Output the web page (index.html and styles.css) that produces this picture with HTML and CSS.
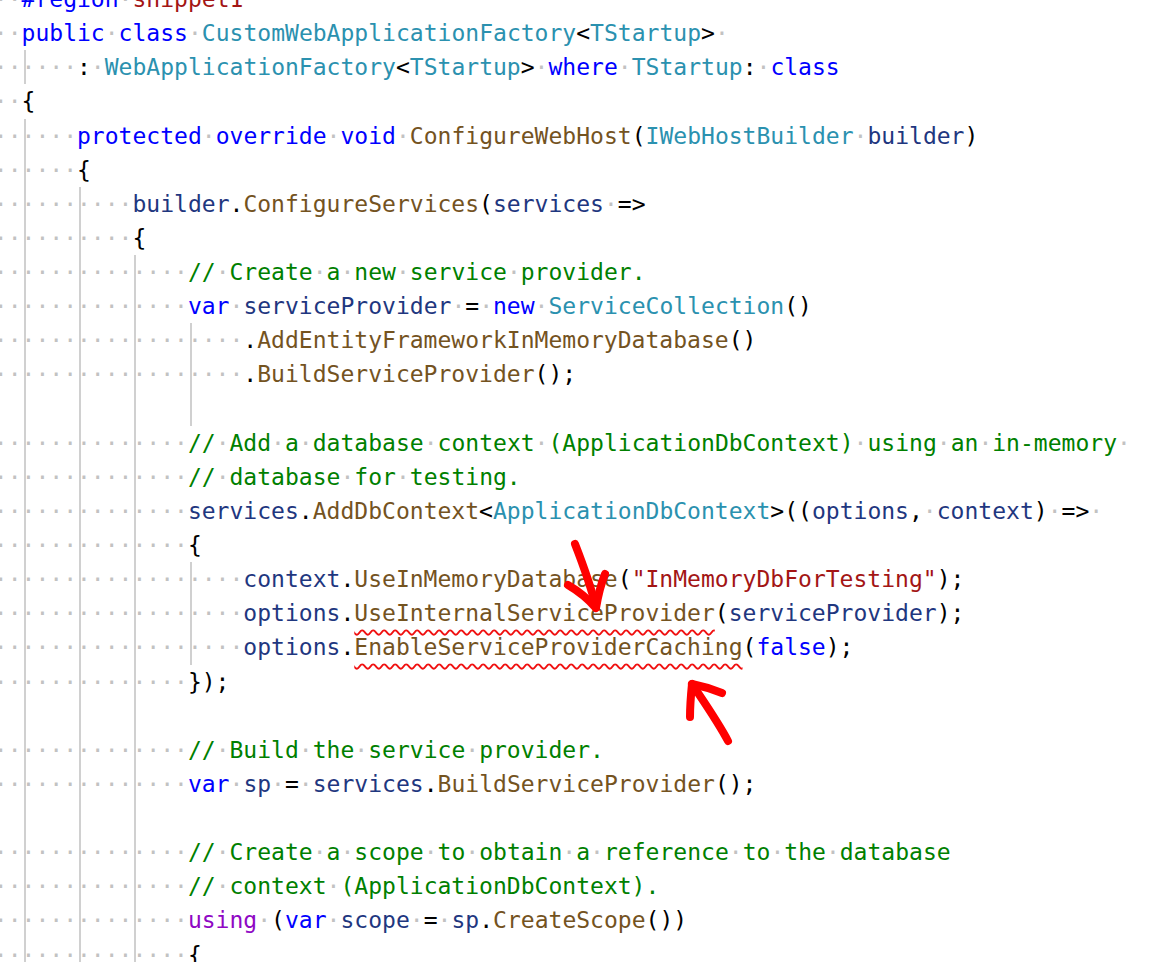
FILE: index.html
```html
<!DOCTYPE html>
<html lang="en">
<head>
<meta charset="utf-8">
<title>CustomWebApplicationFactory</title>
<link rel="stylesheet" href="styles.css">
</head>
<body>
<div class="editor">
<div class="code">
<div class="ln"><span class="ind w">··</span><span class="k">#region</span><span class="w">·</span><span class="r">snippet1</span></div>
<div class="ln"><span class="ind w">··</span><span class="k">public</span><span class="w">·</span><span class="k">class</span><span class="w">·</span><span class="t">CustomWebApplicationFactory</span>&lt;<span class="t">TStartup</span>&gt;<span class="w">·</span></div>
<div class="ln"><span class="ind w">··</span><span class="tab w g">····</span>:<span class="w">·</span><span class="t">WebApplicationFactory</span>&lt;<span class="t">TStartup</span>&gt;<span class="w">·</span><span class="k">where</span><span class="w">·</span><span class="t">TStartup</span>:<span class="w">·</span><span class="k">class</span></div>
<div class="ln"><span class="ind w">··</span>{</div>
<div class="ln"><span class="ind w">··</span><span class="tab w g">····</span><span class="k">protected</span><span class="w">·</span><span class="k">override</span><span class="w">·</span><span class="k">void</span><span class="w">·</span><span class="m">ConfigureWebHost</span>(<span class="t">IWebHostBuilder</span><span class="w">·</span><span class="v">builder</span>)</div>
<div class="ln"><span class="ind w">··</span><span class="tab w g">····</span>{</div>
<div class="ln"><span class="ind w">··</span><span class="tab w g">····</span><span class="tab w g">····</span><span class="v">builder</span>.<span class="m">ConfigureServices</span>(<span class="v">services</span><span class="w">·</span>=&gt;</div>
<div class="ln"><span class="ind w">··</span><span class="tab w g">····</span><span class="tab w g">····</span>{</div>
<div class="ln"><span class="ind w">··</span><span class="tab w g">····</span><span class="tab w g">····</span><span class="tab w g">····</span><span class="c">//<span class="w">·</span>Create<span class="w">·</span>a<span class="w">·</span>new<span class="w">·</span>service<span class="w">·</span>provider.</span></div>
<div class="ln"><span class="ind w">··</span><span class="tab w g">····</span><span class="tab w g">····</span><span class="tab w g">····</span><span class="k">var</span><span class="w">·</span><span class="v">serviceProvider</span><span class="w">·</span>=<span class="w">·</span><span class="k">new</span><span class="w">·</span><span class="t">ServiceCollection</span>()</div>
<div class="ln"><span class="ind w">··</span><span class="tab w g">····</span><span class="tab w g">····</span><span class="tab w g">····</span><span class="tab w g">····</span>.<span class="m">AddEntityFrameworkInMemoryDatabase</span>()</div>
<div class="ln"><span class="ind w">··</span><span class="tab w g">····</span><span class="tab w g">····</span><span class="tab w g">····</span><span class="tab w g">····</span>.<span class="m">BuildServiceProvider</span>();</div>
<div class="ln"><span class="ind"></span><span class="tab g"></span><span class="tab g"></span><span class="tab g"></span><span class="tab g"></span></div>
<div class="ln"><span class="ind w">··</span><span class="tab w g">····</span><span class="tab w g">····</span><span class="tab w g">····</span><span class="c">//<span class="w">·</span>Add<span class="w">·</span>a<span class="w">·</span>database<span class="w">·</span>context<span class="w">·</span>(ApplicationDbContext)<span class="w">·</span>using<span class="w">·</span>an<span class="w">·</span>in-memory<span class="w">·</span></span></div>
<div class="ln"><span class="ind w">··</span><span class="tab w g">····</span><span class="tab w g">····</span><span class="tab w g">····</span><span class="c">//<span class="w">·</span>database<span class="w">·</span>for<span class="w">·</span>testing.</span></div>
<div class="ln"><span class="ind w">··</span><span class="tab w g">····</span><span class="tab w g">····</span><span class="tab w g">····</span><span class="v">services</span>.<span class="m">AddDbContext</span>&lt;<span class="t">ApplicationDbContext</span>&gt;((<span class="v">options</span>,<span class="w">·</span><span class="v">context</span>)<span class="w">·</span>=&gt;<span class="w">·</span></div>
<div class="ln"><span class="ind w">··</span><span class="tab w g">····</span><span class="tab w g">····</span><span class="tab w g">····</span>{</div>
<div class="ln"><span class="ind w">··</span><span class="tab w g">····</span><span class="tab w g">····</span><span class="tab w g">····</span><span class="tab w g">····</span><span class="v">context</span>.<span class="m">UseInMemoryDatabase</span>(<span class="s">"InMemoryDbForTesting"</span>);</div>
<div class="ln"><span class="ind w">··</span><span class="tab w g">····</span><span class="tab w g">····</span><span class="tab w g">····</span><span class="tab w g">····</span><span class="v">options</span>.<span class="m err">UseInternalServiceProvider</span>(<span class="v">serviceProvider</span>);</div>
<div class="ln"><span class="ind w">··</span><span class="tab w g">····</span><span class="tab w g">····</span><span class="tab w g">····</span><span class="tab w g">····</span><span class="v">options</span>.<span class="m err">EnableServiceProviderCaching</span>(<span class="k">false</span>);</div>
<div class="ln"><span class="ind w">··</span><span class="tab w g">····</span><span class="tab w g">····</span><span class="tab w g">····</span>});</div>
<div class="ln"><span class="ind"></span><span class="tab g"></span><span class="tab g"></span><span class="tab g"></span></div>
<div class="ln"><span class="ind w">··</span><span class="tab w g">····</span><span class="tab w g">····</span><span class="tab w g">····</span><span class="c">//<span class="w">·</span>Build<span class="w">·</span>the<span class="w">·</span>service<span class="w">·</span>provider.</span></div>
<div class="ln"><span class="ind w">··</span><span class="tab w g">····</span><span class="tab w g">····</span><span class="tab w g">····</span><span class="k">var</span><span class="w">·</span><span class="v">sp</span><span class="w">·</span>=<span class="w">·</span><span class="v">services</span>.<span class="m">BuildServiceProvider</span>();</div>
<div class="ln"><span class="ind"></span><span class="tab g"></span><span class="tab g"></span><span class="tab g"></span></div>
<div class="ln"><span class="ind w">··</span><span class="tab w g">····</span><span class="tab w g">····</span><span class="tab w g">····</span><span class="c">//<span class="w">·</span>Create<span class="w">·</span>a<span class="w">·</span>scope<span class="w">·</span>to<span class="w">·</span>obtain<span class="w">·</span>a<span class="w">·</span>reference<span class="w">·</span>to<span class="w">·</span>the<span class="w">·</span>database</span></div>
<div class="ln"><span class="ind w">··</span><span class="tab w g">····</span><span class="tab w g">····</span><span class="tab w g">····</span><span class="c">//<span class="w">·</span>context<span class="w">·</span>(ApplicationDbContext).</span></div>
<div class="ln"><span class="ind w">··</span><span class="tab w g">····</span><span class="tab w g">····</span><span class="tab w g">····</span><span class="u">using</span><span class="w">·</span>(<span class="k">var</span><span class="w">·</span><span class="v">scope</span><span class="w">·</span>=<span class="w">·</span><span class="v">sp</span>.<span class="m">CreateScope</span>())</div>
<div class="ln"><span class="ind w">··</span><span class="tab w g">····</span><span class="tab w g">····</span><span class="tab w g">····</span>{</div>
</div>
<svg class="marks" width="1156" height="962" viewBox="0 0 1156 962" aria-hidden="true">
  <g fill="none" stroke="#ff0000" stroke-width="8" stroke-linecap="round" stroke-linejoin="round">
    <path d="M575 544 C 582 562, 590 583, 596 607"/>
    <path d="M568 585 C 580 592, 589 600, 596 608 C 598 596, 601 584, 605 574"/>
    <path d="M728 741 C 718 722, 704 702, 692 684"/>
    <path d="M690 717 C 690 706, 691 694, 692 684 C 702 686, 712 689, 722 693"/>
  </g>
</svg>
</div>
</body>
</html>
```

FILE: styles.css
```css
html, body {
  margin: 0;
  padding: 0;
  background: #ffffff;
}

body {
  width: 1156px;
  height: 962px;
  overflow: hidden;
}

.editor {
  display: flow-root;
  position: relative;
  width: 1156px;
  height: 962px;
  overflow: hidden;
}

.code {
  margin: -18px 0 0 -6.2px;
  font-family: "DejaVu Sans Mono", "Liberation Mono", monospace;
  font-size: 23.04px;
  line-height: 34.125px;
  color: #000000;
}

.ln {
  height: 34.125px;
  white-space: pre;
}

.ind,
.tab {
  display: inline-block;
  height: 34.125px;
  vertical-align: top;
}

.ind {
  width: 2ch;
}

.tab {
  width: 4ch;
}

.g {
  background: linear-gradient(to right, transparent 2px, #d0d0d0 2px, #d0d0d0 4px, transparent 4px);
}

.w { color: #c2c2c2; }
.k { color: #0000ff; }
.t { color: #2b91af; }
.m { color: #74531f; }
.v { color: #1f377f; }
.c { color: #008000; }
.s { color: #a31515; }
.r { color: #a31515; }
.u { color: #8f08c4; }

.err {
  text-decoration-line: underline;
  text-decoration-style: wavy;
  text-decoration-color: #f01010;
  text-decoration-thickness: 1.5px;
  text-underline-offset: 8px;
  text-decoration-skip-ink: none;
}

.marks {
  position: absolute;
  top: 0;
  left: 0;
  pointer-events: none;
}
```
